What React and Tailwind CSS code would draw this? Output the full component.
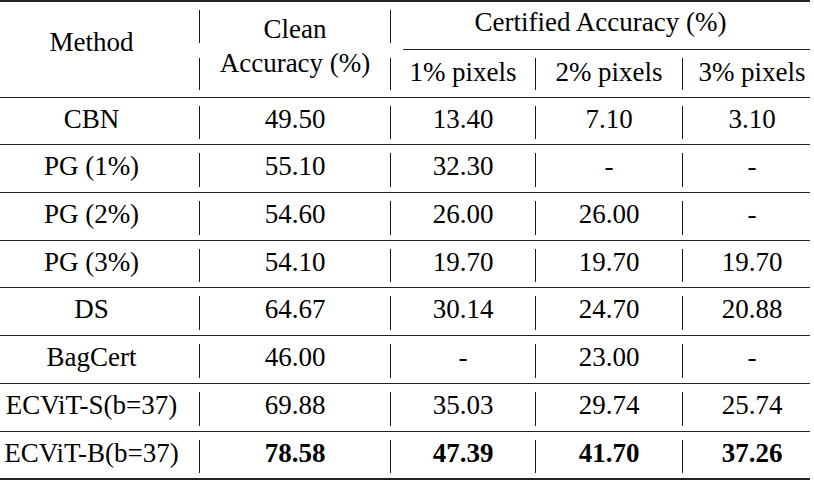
import React from "react";

const rows = [
  { m: "CBN", c: "49.50", a: "13.40", b: "7.10", d: "3.10", h: "h-[46px]" },
  { m: "PG (1%)", c: "55.10", a: "32.30", b: "-", d: "-", h: "h-[47px]" },
  { m: "PG (2%)", c: "54.60", a: "26.00", b: "26.00", d: "-", h: "h-[47px]" },
  { m: "PG (3%)", c: "54.10", a: "19.70", b: "19.70", d: "19.70", h: "h-[46px]" },
  { m: "DS", c: "64.67", a: "30.14", b: "24.70", d: "20.88", h: "h-[47px]" },
  { m: "BagCert", c: "46.00", a: "-", b: "23.00", d: "-", h: "h-[47px]" },
  { m: "ECViT-S(b=37)", c: "69.88", a: "35.03", b: "29.74", d: "25.74", h: "h-[47px]" },
  { m: "ECViT-B(b=37)", c: "78.58", a: "47.39", b: "41.70", d: "37.26", h: "h-[46px]", bold: true },
];

function Bar() {
  return <div className="bg-[#1a1a1a] mt-[8px] mb-[5px]" />;
}

function Rule() {
  return <div className="h-px bg-[#222]" />;
}

function Row({ r }) {
  const bold = r.bold ? "font-bold" : "";
  return (
    <div className={`grid grid-cols-[199px_1px_190px_1px_144px_1px_146px_1px_127px] ${r.h}`}>
      <div className="flex items-center justify-center pr-[16px] pb-[4px] whitespace-nowrap">{r.m}</div>
      <Bar />
      <div className={`flex items-center justify-center pb-[4px] ${bold}`}>{r.c}</div>
      <Bar />
      <div className={`flex items-center justify-center pb-[4px] ${bold}`}>{r.a}</div>
      <Bar />
      <div className={`flex items-center justify-center pb-[4px] ${bold}`}>{r.b}</div>
      <Bar />
      <div className={`flex items-center justify-center pl-[11px] pb-[4px] ${bold}`}>{r.d}</div>
    </div>
  );
}

export default function App() {
  return (
    <div className="w-[814px] h-[481px] bg-white overflow-hidden font-['Liberation_Serif','Times_New_Roman',serif] text-[27px] text-black leading-none">
      <div className="w-[810px] flex flex-col">
        <div className="h-[2px] bg-[#222]" />
        <div className="grid grid-cols-[199px_1px_190px_1px_144px_1px_146px_1px_127px] grid-rows-[47px_1px_47px]">
          <div className="col-start-1 row-start-1 row-span-3 flex items-center justify-center pr-[16px] pb-[15px]">
            Method
          </div>
          <div className="col-start-2 row-start-1 bg-[#1a1a1a] mt-[8px] mb-[6px]" />
          <div className="col-start-2 row-start-3 bg-[#1a1a1a] mt-[8px] mb-[7px]" />
          <div className="col-start-3 row-start-1 row-span-3 flex flex-col items-center justify-center leading-[34px] pb-[8px]">
            <span>Clean</span>
            <span>Accuracy (%)</span>
          </div>
          <div className="col-start-4 row-start-1 bg-[#1a1a1a] mt-[8px] mb-[6px]" />
          <div className="col-start-4 row-start-3 bg-[#1a1a1a] mt-[8px] mb-[7px]" />
          <div className="col-start-5 col-span-5 row-start-1 flex items-center justify-center pb-[7px] whitespace-nowrap">
            Certified Accuracy (%)
          </div>
          <div className="col-start-5 col-span-5 row-start-2 bg-[#222] ml-[12px]" />
          <div className="col-start-5 row-start-3 flex items-center justify-center pb-[3px] whitespace-nowrap">1% pixels</div>
          <div className="col-start-6 row-start-3 bg-[#1a1a1a] mt-[8px] mb-[7px]" />
          <div className="col-start-7 row-start-3 flex items-center justify-center pb-[3px] whitespace-nowrap">2% pixels</div>
          <div className="col-start-8 row-start-3 bg-[#1a1a1a] mt-[8px] mb-[7px]" />
          <div className="col-start-9 row-start-3 flex items-center justify-center pl-[11px] pb-[3px] whitespace-nowrap">3% pixels</div>
        </div>
        {rows.map((r) => (
          <React.Fragment key={r.m}>
            <Rule />
            <Row r={r} />
          </React.Fragment>
        ))}
        <div className="h-[2px] bg-[#222]" />
      </div>
    </div>
  );
}
